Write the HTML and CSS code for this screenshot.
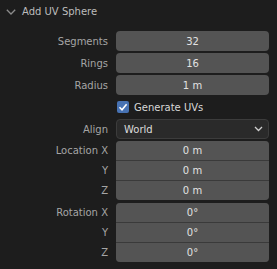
FILE: index.html
```html
<!DOCTYPE html>
<html>
<head>
<meta charset="utf-8">
<link rel="stylesheet" href="styles.css">
</head>
<body>
<div class="panel">
  <div class="header">
    <svg class="chev" width="10" height="6" viewBox="0 0 10 6"><path d="M0.8 0.8 L5 5 L9.2 0.8" fill="none" stroke="#8c8c8c" stroke-width="1.3"/></svg>
    <span class="title">Add UV Sphere</span>
  </div>
  <div class="form">
    <div class="row"><span class="label">Segments</span><div class="field single">32</div></div>
    <div class="row"><span class="label">Rings</span><div class="field single">16</div></div>
    <div class="row"><span class="label">Radius</span><div class="field single">1 m</div></div>
    <div class="row"><span class="label"></span>
      <div class="check">
        <span class="box"><svg width="12" height="12" viewBox="0 0 12 12"><path d="M2.5 6.2 L5 8.7 L9.6 3.2" fill="none" stroke="#ffffff" stroke-width="1.6"/></svg></span>
        <span class="check-text">Generate UVs</span>
      </div>
    </div>
    <div class="row"><span class="label">Align</span>
      <div class="select"><span>World</span><svg width="9" height="6" viewBox="0 0 9 6"><path d="M1 1 L4.5 4.5 L8 1" fill="none" stroke="#cfcfcf" stroke-width="1.3"/></svg></div>
    </div>
    <div class="group">
      <div class="labels">
        <span class="glabel">Location X</span>
        <span class="glabel">Y</span>
        <span class="glabel">Z</span>
      </div>
      <div class="stack">
        <div class="gfield">0 m</div>
        <div class="gfield">0 m</div>
        <div class="gfield">0 m</div>
      </div>
    </div>
    <div class="group g2">
      <div class="labels">
        <span class="glabel">Rotation X</span>
        <span class="glabel">Y</span>
        <span class="glabel">Z</span>
      </div>
      <div class="stack">
        <div class="gfield">0°</div>
        <div class="gfield">0°</div>
        <div class="gfield">0°</div>
      </div>
    </div>
  </div>
</div>
</body>
</html>
```

FILE: styles.css
```css
* { box-sizing: border-box; }
html, body {
  margin: 0;
  padding: 0;
  background: #1d1d1d;
  width: 277px;
  height: 269px;
  overflow: hidden;
}
.panel {
  font-family: "DejaVu Sans", sans-serif;
  font-size: 10px;
  color: #a8a8a8;
}
.header {
  height: 22px;
  display: flex;
  align-items: center;
  padding-left: 6px;
  gap: 6px;
  color: #bcbcbc;
}
.chev { margin-top: 1px; }
.title { font-size: 10px; }
.form {
  padding-top: 9px;
  display: flex;
  flex-direction: column;
  gap: 2px;
}
.row {
  display: flex;
  height: 20px;
  align-items: center;
  gap: 8px;
}
.label {
  width: 108px;
  text-align: right;
  color: #a5a5a5;
}
.field {
  width: 153px;
  height: 20px;
  background: #545454;
  border-radius: 4px;
  color: #e2e2e2;
  display: flex;
  align-items: center;
  justify-content: center;
}
.check {
  display: flex;
  align-items: center;
  gap: 5px;
  padding-left: 1px;
  color: #d8d8d8;
}
.box {
  width: 12px;
  height: 12px;
  border-radius: 2px;
  background: #4772b3;
  display: flex;
}
.select {
  width: 153px;
  height: 20px;
  background: #2a2a2a;
  border: 1px solid #3c3c3c;
  border-radius: 4px;
  display: flex;
  align-items: center;
  justify-content: space-between;
  padding: 0 5px 0 7px;
  color: #dcdcdc;
}
.group {
  display: flex;
  gap: 8px;
}
.g2 { margin-top: 1px; }
.labels {
  width: 108px;
  display: flex;
  flex-direction: column;
  gap: 1px;
}
.glabel {
  height: 19px;
  line-height: 19px;
  text-align: right;
  color: #a5a5a5;
}
.stack {
  width: 153px;
  display: flex;
  flex-direction: column;
  gap: 1px;
  background: #3a3a3a;
  border-radius: 4px;
  overflow: hidden;
}
.gfield {
  height: 19px;
  background: #545454;
  color: #e2e2e2;
  display: flex;
  align-items: center;
  justify-content: center;
}
```
